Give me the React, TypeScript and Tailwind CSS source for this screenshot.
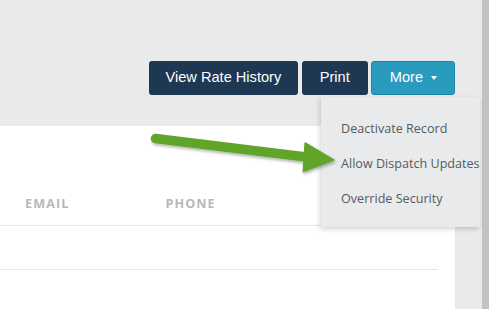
import React from "react";

function Arrow() {
  return (
    <svg
      className="pointer-events-none absolute left-0 top-0"
      width="489"
      height="309"
      viewBox="0 0 489 309"
    >
      <defs>
        <filter id="arrowShadow" x="-10%" y="-30%" width="120%" height="160%">
          <feDropShadow dx="1" dy="2" stdDeviation="1.5" floodColor="#000" floodOpacity="0.3" />
        </filter>
      </defs>
      <g filter="url(#arrowShadow)" fill="#60a52a" stroke="#60a52a">
        <line x1="155.5" y1="138.5" x2="306" y2="157" strokeWidth="9.5" strokeLinecap="round" />
        <polygon points="305,142.5 334.5,160 303,172" strokeWidth="1" strokeLinejoin="round" />
      </g>
    </svg>
  );
}

function DropdownMenu() {
  const items = ["Deactivate Record", "Allow Dispatch Updates", "Override Security"];
  return (
    <div className="absolute left-[321px] top-[97px] w-[159px] bg-[#e9eaec] pt-[15px] pb-[10px] shadow-[-1px_2px_5px_rgba(0,0,0,0.18)]">
      {items.map((item) => (
        <div
          key={item}
          className="flex h-[35px] items-center whitespace-nowrap pl-[20px] text-[12.6px] text-[#555a60]"
          style={{ fontFamily: '"Open Sans", sans-serif' }}
        >
          {item}
        </div>
      ))}
    </div>
  );
}

export default function App() {
  return (
    <div className="relative flex h-[309px] w-[489px] overflow-hidden bg-[#e9eaec]">
      <div className="flex-1 pr-[27px]">
        <div
          className="flex justify-end pt-[61px] text-[14.6px] text-white"
          style={{ fontFamily: '"Liberation Sans", Arial, sans-serif' }}
        >
          <button className="h-[34px] rounded-[3px] bg-[#1e3853] px-[16.5px]">View Rate History</button>
          <button className="ml-[4px] h-[34px] rounded-[3px] bg-[#1e3853] px-[18px]">Print</button>
          <button className="ml-[3px] flex h-[34px] items-center rounded-[3px] border border-[#1f86a8] bg-[#289bbf] pl-[18px] pr-[17px]">
            More
            <span className="ml-[8px] h-0 w-0 border-x-[3.5px] border-t-[4px] border-x-transparent border-t-white" />
          </button>
        </div>
        <div className="mt-[31px] h-[200px] bg-white pr-[17px]">
          <div
            className="flex h-[100px] items-end border-b border-[#e6e6e6] pb-[11px] text-[12.6px] font-bold tracking-[1.1px] text-[#b8b8b8]"
            style={{ fontFamily: '"Open Sans", sans-serif' }}
          >
            <span className="ml-[25px]">EMAIL</span>
            <span className="ml-[96px]">PHONE</span>
          </div>
          <div className="h-[44px] border-b border-[#e6e6e6]" />
        </div>
      </div>
      <div className="w-[7px] bg-[#c3c3c3]" />
      <DropdownMenu />
      <Arrow />
    </div>
  );
}
